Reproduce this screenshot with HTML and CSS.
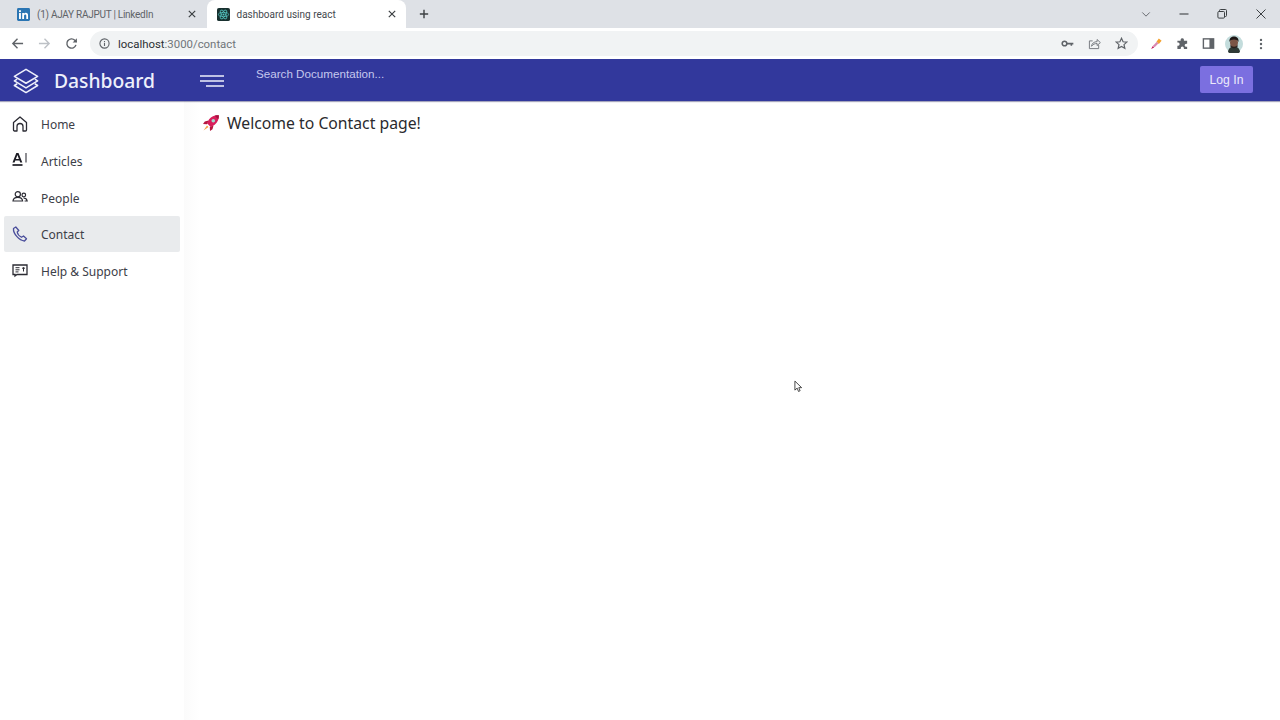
FILE: index.html
```html
<!DOCTYPE html>
<html lang="en">
<head>
<meta charset="utf-8">
<title>dashboard using react</title>
<link rel="stylesheet" href="styles.css">
</head>
<body>
<div class="window">
  <div class="tabstrip">
    <div class="tab">
      <svg class="favicon" viewBox="0 0 14 14"><rect width="14" height="14" rx="1.5" fill="#2a75b3"/><rect x="2.2" y="5.4" width="2" height="6.4" fill="#fff"/><rect x="2.2" y="2.4" width="2" height="2" fill="#fff"/><path d="M5.6 5.4h1.9v.9c.4-.7 1.1-1.1 2-1.1 1.7 0 2.4 1 2.4 2.8v3.8H10V8.500c0-1-.3-1.600-1.100-1.600-.9 0-1.300.6-1.300 1.600v3.300h-2z" fill="#fff"/></svg>
      <span class="tab-title tab-title-caps">(1) AJAY RAJPUT | LinkedIn</span>
      <svg class="tab-close" viewBox="0 0 10 10"><path d="M1 1l8 8M9 1l-8 8" stroke="#3c4043" stroke-width="1.500"/></svg>
    </div>
    <div class="tab tab-active">
      <svg class="favicon" viewBox="0 0 14 14"><rect width="14" height="14" rx="2" fill="#18302f"/><g fill="none" stroke="#56c7c4" stroke-width=".8"><ellipse cx="7" cy="7" rx="5.500" ry="2.200"/><ellipse cx="7" cy="7" rx="5.500" ry="2.200" transform="rotate(60 7 7)"/><ellipse cx="7" cy="7" rx="5.500" ry="2.200" transform="rotate(120 7 7)"/></g><circle cx="7" cy="7" r="1.100" fill="#56c7c4"/></svg>
      <span class="tab-title">dashboard using react</span>
      <svg class="tab-close" viewBox="0 0 10 10"><path d="M1 1l8 8M9 1l-8 8" stroke="#3c4043" stroke-width="1.500"/></svg>
    </div>
    <svg class="new-tab" viewBox="0 0 12 12"><path d="M6 1v10M1 6h10" stroke="#3c4043" stroke-width="1.700"/></svg>
    <div class="window-controls">
      <svg class="wc wc-chevron" viewBox="0 0 12 8"><path d="M1.500 1.500L6 6l4.500-4.500" fill="none" stroke="#5f6368" stroke-width="1.100"/></svg>
      <svg class="wc wc-min" viewBox="0 0 10 10"><path d="M.5 5h9" stroke="#3c4043" stroke-width="1.100"/></svg>
      <svg class="wc wc-max" viewBox="0 0 10 10"><path d="M2.500 2.500V1.500a1 1 0 0 1 1-1h5a1 1 0 0 1 1 1v5a1 1 0 0 1-1 1H7.500" fill="none" stroke="#3c4043"/><rect x=".9" y="2.500" width="6.600" height="6.600" rx="1" fill="none" stroke="#3c4043"/></svg>
      <svg class="wc wc-close" viewBox="0 0 10 10"><path d="M.5.5l9 9M9.500.5l-9 9" stroke="#3c4043" stroke-width="1"/></svg>
    </div>
  </div>
  <div class="toolbar">
    <svg class="nav-icon" viewBox="0 0 14 14"><path d="M13 7H2M7 2L2 7l5 5" fill="none" stroke="#5f6368" stroke-width="1.500"/></svg>
    <svg class="nav-icon" viewBox="0 0 14 14"><path d="M1 7h11M7 2l5 5-5 5" fill="none" stroke="#bdc1c6" stroke-width="1.500"/></svg>
    <svg class="nav-icon" viewBox="0 0 14 14"><path d="M11.800 8.500A5 5 0 1 1 10.600 3.500L12.500 5.300" fill="none" stroke="#5f6368" stroke-width="1.500"/><path d="M12.800 1.300v4.600H8.200z" fill="#5f6368"/></svg>
    <div class="omnibox">
      <svg class="info-icon" viewBox="0 0 12 12"><circle cx="6" cy="6" r="5" fill="none" stroke="#5f6368" stroke-width="1.200"/><path d="M6 5.200v3.500M6 3.200v1.200" stroke="#5f6368" stroke-width="1.200"/></svg>
      <span class="url"><span class="url-host">localhost</span>:3000/contact</span>
      <div class="omni-actions">
        <svg class="omni-icon" viewBox="0 0 14 14"><circle cx="3.800" cy="7" r="2.500" fill="none" stroke="#5f6368" stroke-width="1.700"/><path d="M6.300 6.200h7v2h-1.300v1.300h-1.700V8.200H6.300z" fill="#5f6368"/></svg>
        <svg class="omni-icon" viewBox="0 0 14 14"><path d="M5 4.200H1.500v8.300h10V8.500" fill="none" stroke="#70757a"/><path d="M3.800 10c.3-3 2.500-5 6-5V2.700l3.500 3.300-3.500 3.200V7c-2.500 0-4.500.8-6 3z" fill="none" stroke="#70757a"/></svg>
        <svg class="omni-icon" viewBox="0 0 14 14"><path d="M7 1.400l1.700 3.700 4 .4-3 2.700.9 4L7 10.200l-3.600 2 .9-4-3-2.700 4-.4z" fill="none" stroke="#5f6368" stroke-width="1.300"/></svg>
      </div>
    </div>
    <div class="toolbar-extras">
      <svg class="ext-icon" viewBox="0 0 14 14"><path d="M9.500 1.500l3 2.500-3 3.500-2.500-2.500z" fill="#f4a12f"/><path d="M7.300 5.200l1.700 1.900-4 4-2-1.500z" fill="#d98ab0"/><path d="M3 9.800l1.500 1.400-3.300 1.800z" fill="#c2185b"/></svg>
      <svg class="ext-icon" viewBox="0 0 14 14"><path d="M5 2.800a1.800 1.800 0 0 1 3.500 0V4H12v3.200h-1a1.700 1.700 0 0 0 0 3.400h1V13H8.500v-1a1.700 1.700 0 0 0-3.400 0v1H1.500V9.500h1a1.800 1.800 0 0 0 0-3.500h-1V4H5z" fill="#5f6368"/></svg>
      <svg class="ext-icon" viewBox="0 0 14 14"><rect x="1.500" y="2" width="11" height="10" fill="none" stroke="#5f6368" stroke-width="1.500"/><rect x="8" y="2" width="4.500" height="10" fill="#5f6368"/></svg>
      <svg class="avatar" viewBox="0 0 18 18"><circle cx="9" cy="9" r="9" fill="#c3dcdc"/><path d="M3 17c.5-4 3-5.500 6-5.500s5.500 1.500 6 5.500a9 9 0 0 1-12 0z" fill="#2f3a36"/><ellipse cx="9" cy="7.500" rx="4" ry="5" fill="#7c5546"/><path d="M4.500 7C4 3 6.500 1.500 9 1.500S14 3 13.500 7c-.8-1.800-2-2.500-4.500-2.500S5.300 5.200 4.500 7z" fill="#1d1716"/><path d="M5.500 9.500c1 3 6 3 7 0v2.500L9 13.500 5.500 12z" fill="#2a1f1c"/></svg>
      <svg class="menu-dots" viewBox="0 0 4 14"><circle cx="2" cy="2.200" r="1.400" fill="#5f6368"/><circle cx="2" cy="7" r="1.400" fill="#5f6368"/><circle cx="2" cy="11.800" r="1.400" fill="#5f6368"/></svg>
    </div>
  </div>
  <header class="app-header">
    <div class="brand">
      <svg class="brand-logo" viewBox="0 0 28 28"><g fill="none" stroke="#eef0fb" stroke-width="1.700" stroke-linejoin="round"><path d="M14 2L26.500 9.500 14 17 1.500 9.500z"/><path d="M4.500 12.500L1.500 14.400 14 22 26.500 14.400 23.500 12.500"/><path d="M4.500 17.500L1.500 19.400 14 27 26.500 19.400 23.500 17.500"/></g></svg>
      <span class="brand-name">Dashboard</span>
    </div>
    <svg class="hamburger" viewBox="0 0 24 12"><path d="M0 1h24M0 6h24M6 11h18" stroke="#eef0fb" stroke-width="1.500"/></svg>
    <span class="search">Search Documentation...</span>
    <button class="login" type="button">Log In</button>
  </header>
  <div class="app-body">
    <nav class="sidebar">
      <a class="nav-item"><svg class="item-icon" viewBox="0 0 16 16"><path d="M5 15H2.200A1 1 0 0 1 1.500 14V6.500L8 1l6.500 5.500V14a1 1 0 0 1-1 1H11V10.500a3 3 0 0 0-6 0z" fill="none" stroke="#2b2b33" stroke-width="1.300" stroke-linejoin="round"/></svg><span>Home</span></a>
      <a class="nav-item"><svg class="item-icon" viewBox="0 0 16 16"><path d="M.5 10.500L4.300 1h2.200L10.300 10.500H8.200L7.500 8.500H3.300L2.600 10.500zM3.900 6.900h3L5.400 2.900z" fill="#1c1c24"/><path d="M14 1v9.500" stroke="#44444c" stroke-width="1.200"/><path d="M.5 13h10" stroke="#1c1c24" stroke-width="1.700"/></svg><span>Articles</span></a>
      <a class="nav-item"><svg class="item-icon" viewBox="0 0 16 16"><g fill="none" stroke="#2b2b33" stroke-width="1.200"><circle cx="5.800" cy="5.200" r="2.600"/><path d="M1 12c.2-2.600 2-3.700 4.800-3.700s4.600 1.100 4.800 3.700z"/><circle cx="11.800" cy="6" r="1.800"/><path d="M11.500 9c2 0 3.300.8 3.700 3h-2.600"/></g></svg><span>People</span></a>
      <a class="nav-item nav-item-active"><svg class="item-icon" viewBox="0 0 16 16"><path d="M3.800 1L1.500 2.500C1 7.500 7 14.500 12.500 15l2-2.300-3-2.700-2 1.300C8 10.500 5.500 8 5.200 6L6.800 4.500z" fill="none" stroke="#4b4f9c" stroke-width="1.300" stroke-linejoin="round"/></svg><span>Contact</span></a>
      <a class="nav-item"><svg class="item-icon" viewBox="0 0 16 16"><path d="M1 2h14v9.500H5L3 13v-1.500H1z" fill="none" stroke="#2b2b33" stroke-width="1.300"/><path d="M3.500 4.700h4M3.500 6.800h4M3.500 8.900h3M11.500 4.500v4M10 5.500l1.500-1 1.500 1" fill="none" stroke="#2b2b33" stroke-width="1"/></svg><span>Help &amp; Support</span></a>
    </nav>
    <main class="content">
      <h1 class="welcome"><svg class="rocket" viewBox="0 0 18 18"><path d="M16.800 1.200c-4-.3-7.200 1.100-9.700 4L5 9.300 8.700 13l4-2.300c3-2.500 4.300-5.500 4.100-9.500z" fill="#d81e5b"/><path d="M16.800 1.200c-1.500-.1-2.900 0-4.100.5l3.600 3.600c.5-1.200.6-2.600.5-4.100z" fill="#a5123f"/><circle cx="11.300" cy="6.700" r="1.800" fill="#9fd8d0"/><path d="M6.500 6.500L2.800 7.500 1 10l4 .2zM11.500 11.500l-1 3.700L8 17l-.2-4z" fill="#b5163f"/><path d="M5 11.500L1.500 16.500 6.500 13z" fill="#f59e42"/></svg><span>Welcome to Contact page!</span></h1>
    </main>
  </div>
  <svg class="cursor" viewBox="0 0 10 14"><path d="M1 1v10l2.500-2.200L5 12.500l1.800-.8L5.300 8.300H8.500z" fill="#fff" stroke="#222" stroke-width=".9"/></svg>
</div>
</body>
</html>
```
FILE: styles.css
```css
* { box-sizing: border-box; }
html, body { margin: 0; height: 100%; overflow: hidden; background: #fff; }
.window { position: relative; display: flex; flex-direction: column; width: 1280px; height: 720px; font-family: "Liberation Sans", Arial, sans-serif; }

.tabstrip { display: flex; align-items: center; height: 28px; background: #dee1e6; padding-left: 7px; flex: none; }
.tab { display: flex; align-items: center; width: 199.500px; height: 28px; padding: 0 9.500px 0 10px; color: #5f6368; font-size: 10px; font-family: "Roboto", sans-serif; }
.tab-active { background: #fff; border-radius: 8px 8px 0 0; color: #45494e; }
.favicon { width: 13px; height: 13px; margin-right: 7px; flex: none; }
.tab-title { flex: 1; white-space: nowrap; }
.tab-title-caps { letter-spacing: -.27px; }
.tab-close { width: 8px; height: 8px; flex: none; margin-right: 1px; }
.new-tab { width: 10px; height: 10px; margin-left: 13px; }
.window-controls { display: flex; align-items: center; margin-left: auto; padding-right: 14px; }
.wc { display: block; }
.wc-chevron { width: 10px; height: 7px; margin-right: 28px; }
.wc-min { width: 10px; height: 10px; margin-right: 28px; }
.wc-max { width: 10px; height: 10px; margin-right: 29px; }
.wc-close { width: 10px; height: 10px; }

.toolbar { display: flex; align-items: center; height: 31px; background: #fff; padding: 0 0 0 11px; flex: none; }
.nav-icon { width: 13px; height: 13px; margin-right: 14px; flex: none; }
.omnibox { display: flex; align-items: center; width: 1048px; height: 25px; margin-left: -2px; padding: 0 10px 0 9px; background: #f1f3f4; border-radius: 13px; }
.info-icon { width: 11px; height: 11px; margin-right: 8px; flex: none; }
.url { font-size: 11.400px; font-family: "Roboto", sans-serif; color: #70757a; }
.url-host { color: #2b2f33; }
.omni-actions { display: flex; align-items: center; gap: 14px; margin-left: auto; }
.omni-icon { width: 13px; height: 13px; }
.toolbar-extras { display: flex; align-items: center; margin-left: 11.500px; }
.ext-icon { width: 13px; height: 13px; margin-right: 13px; }
.avatar { width: 18px; height: 18px; margin-left: -2.500px; }
.menu-dots { width: 4px; height: 12px; margin-left: 16px; }

.app-header { display: flex; align-items: center; height: 42px; background: #32389c; padding: 0 27px 0 13px; flex: none; box-shadow: 0 1px 1px rgba(30, 30, 90, .4); position: relative; }
.brand { display: flex; align-items: center; width: 187px; }
.brand-logo { width: 26px; height: 27px; margin-right: 15px; }
.brand-name { color: #eef0fb; font-size: 19.300px; font-family: "Noto Sans", sans-serif; font-weight: 500; }
.hamburger { width: 24px; height: 12px; margin-top: 1px; }
.search { color: #c5c8ee; font-size: 11.650px; margin: -13px 0 0 32px; }
.login { margin-left: auto; margin-top: -1px; width: 53px; height: 27px; padding: 0; border: 0; border-radius: 2px; background: #7b6fe0; color: #eceafb; font-size: 12.200px; font-family: "Liberation Sans", Arial, sans-serif; }

.app-body { display: flex; flex: 1; min-height: 0; }
.sidebar { width: 184px; flex: none; padding: 4.500px 4.500px 0 4px; background: #fff; display: flex; flex-direction: column; gap: .75px; }
.nav-item { display: flex; align-items: center; height: 36px; flex: none; padding: 0 0 0 8px; border-radius: 2px; color: #3d4048; font-size: 12px; font-family: "Noto Sans", sans-serif; }
.nav-item span { padding-top: 2px; }
.nav-item-active { background: #e9ebed; }
.item-icon { width: 16px; height: 16px; margin-right: 13px; flex: none; }
.content { flex: 1; padding: 9.500px 18px; background: linear-gradient(90deg, #fbfbfb, #fdfdfd 50%, #fff) no-repeat 0 0 / 16px 100%; }
.welcome { display: flex; align-items: center; margin: 0; font-size: 15.750px; line-height: 24px; font-weight: 400; color: #2a2a2e; font-family: "Noto Sans", sans-serif; }
.rocket { width: 18px; height: 18px; margin-right: 7px; }

.cursor { position: absolute; left: 794px; top: 380px; width: 9px; height: 13px; }
```
